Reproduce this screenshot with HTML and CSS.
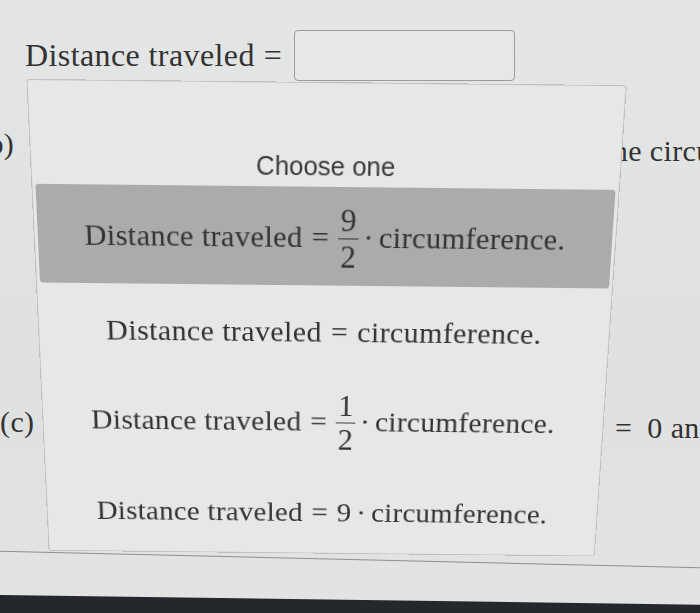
FILE: index.html
```
<!DOCTYPE html>
<html>
<head>
<meta charset="utf-8">
<link rel="stylesheet" href="styles.css">
</head>
<body>
<div class="page">
  <div class="answer-row">
    <span class="math title">Distance traveled<span class="rel">=</span></span>
    <div class="answer-box"></div>
  </div>
  <div class="part part-b">
    <span class="label label-b">(b)</span>
    <span class="under under-b">the circumference</span>
  </div>
  <div class="part part-c">
    <span class="label">(c)</span>
    <span class="under under-c"><span class="rel">=</span>0 and</span>
  </div>
  <div class="rule"></div>
  <div class="taskbar"></div>

  <div class="dropdown">
    <div class="choose">Choose one</div>
    <div class="option selected tight">
      <span class="math">Distance traveled<span class="rel">=</span></span>
      <span class="frac"><span class="num">9</span><span class="den">2</span></span>
      <span class="math"><span class="dot">·</span>circumference.</span>
    </div>
    <div class="option opt2">
      <span class="math">Distance traveled<span class="rel">=</span>circumference.</span>
    </div>
    <div class="option opt3 tight">
      <span class="math">Distance traveled<span class="rel">=</span></span>
      <span class="frac"><span class="num">1</span><span class="den">2</span></span>
      <span class="math"><span class="dot">·</span>circumference.</span>
    </div>
    <div class="option opt4 tight">
      <span class="math">Distance traveled<span class="rel">=</span>9<span class="dot">·</span>circumference.</span>
    </div>
  </div>
</div>
</body>
</html>
```

FILE: styles.css
```
html, body {
  margin: 0;
  padding: 0;
}
body {
  width: 700px;
  height: 613px;
  overflow: hidden;
  background: linear-gradient(180deg, #e4e6e5 0%, #dfe1e0 60%, #e2e3e2 100%);
  font-family: "Liberation Serif", "Times New Roman", serif;
  color: #333;
}
.page {
  position: relative;
  width: 700px;
  height: 613px;
  overflow: hidden;
  display: flex;
  flex-direction: column;
}
.math {
  font-family: "Liberation Serif", "Times New Roman", serif;
  font-size: 30px;
  letter-spacing: 0.4px;
  white-space: nowrap;
}
.math.title {
  font-size: 32px;
}
.rel {
  display: inline-block;
  margin: 0 9px;
}
.dot {
  display: inline-block;
  margin: 0 5px;
}
.tight .math {
  letter-spacing: 0.3px;
}
.answer-row {
  display: flex;
  align-items: center;
  padding: 30px 0 0 25px;
}
.answer-row .rel {
  margin-left: 9px;
  margin-right: 12px;
}
.answer-box {
  width: 219px;
  height: 49px;
  border: 1.5px solid #9a9c9c;
  border-radius: 4px;
  background: #e6e8e7;
}
.part {
  display: flex;
  align-items: center;
  font-size: 30px;
  letter-spacing: 0.4px;
  white-space: nowrap;
}
.part-b {
  margin-top: 48px;
  height: 30px;
}
.label-b {
  margin-left: -22px;
}
.under-b {
  margin-left: 596px;
  margin-top: 14px;
}
.part-c {
  margin-top: 248px;
  height: 30px;
}
.under-c {
  margin-left: 585px;
  margin-top: 12px;
}
.under-c .rel {
  margin: 0 15px 0 0;
}
.label {
  width: 30px;
}
.rule {
  margin-top: 122px;
  height: 1px;
  background: #8e9090;
  transform: rotate(1.35deg);
}
.taskbar {
  margin-top: 35px;
  flex: 1;
  margin-bottom: -20px;
  background: #24272b;
  transform-origin: left top;
  transform: skewY(0.8deg);
}
.dropdown {
  position: absolute;
  left: 38px;
  top: 89px;
  width: 572px;
  height: 480px;
  background: #e6e8e7;
  border: 1px solid #bfc1c0;
  border-radius: 3px;
  box-sizing: border-box;
  display: flex;
  flex-direction: column;
  align-items: stretch;
  transform: rotate(0.6deg) perspective(1000px) rotateX(-11.4deg);
}
.choose {
  font-family: "Liberation Sans", Arial, sans-serif;
  font-size: 25px;
  color: #3a3a3a;
  text-align: center;
  height: 98px;
  box-sizing: border-box;
  padding-top: 65px;
  line-height: 26px;
}
.option {
  display: flex;
  align-items: center;
  justify-content: center;
  border-radius: 3px;
}
.option.selected {
  height: 97px;
  margin: 0 3px;
  background: #ababab;
}
.opt2 {
  height: 94px;
}
.opt3 {
  height: 92px;
}
.opt4 {
  height: 96px;
  padding-top: 8px;
  box-sizing: border-box;
}
.frac {
  display: inline-flex;
  flex-direction: column;
  align-items: center;
  font-size: 31px;
  line-height: 30px;
  margin-top: 4px;
}
.num {
  padding: 0 2px 2px;
  border-bottom: 1.5px solid #333;
}
.den {
  padding-top: 3px;
}
```
